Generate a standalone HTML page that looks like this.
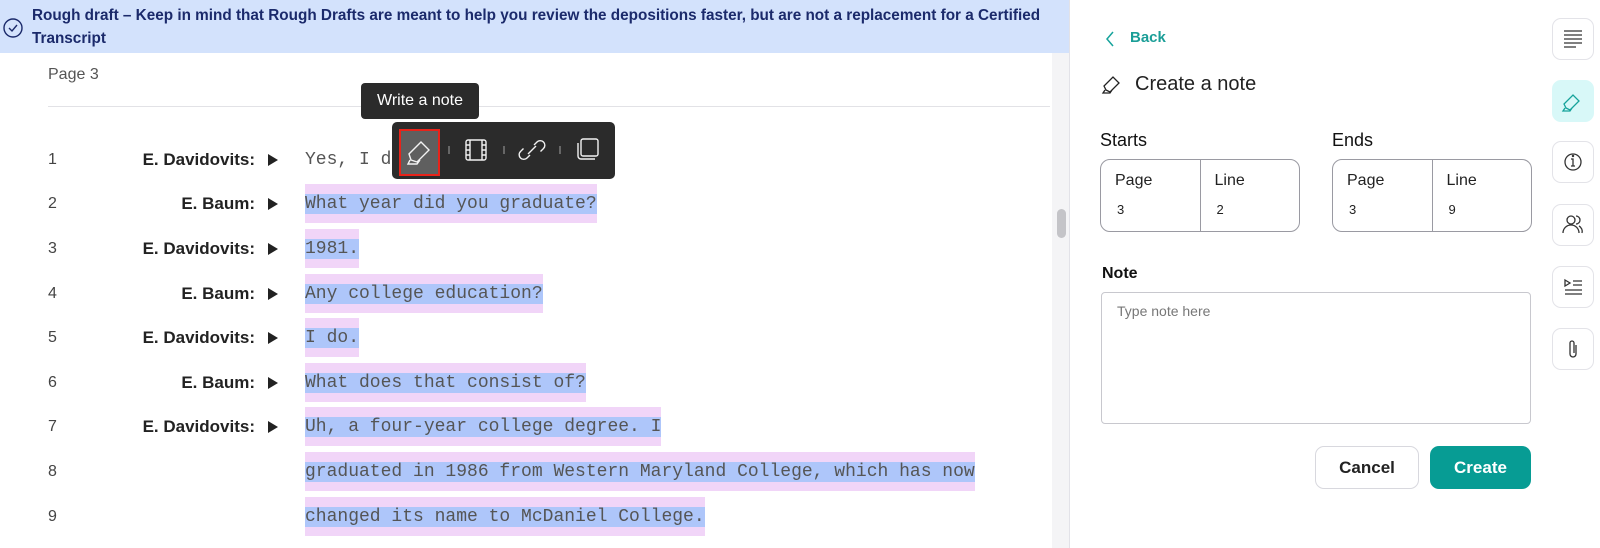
<!DOCTYPE html>
<html><head><meta charset="utf-8"><style>
*{box-sizing:border-box;margin:0;padding:0}
body{width:1600px;height:548px;background:#fff;position:relative;overflow:hidden;font-family:"Liberation Sans",sans-serif;color:#222}
.a{position:absolute}
.banner{left:0;top:0;width:1070px;height:53px;background:#d3e2fc;color:#1b2a6b;font-size:15.3px;font-weight:bold;line-height:23px;padding:4px 0 0 32px;white-space:nowrap}
.num{left:48px;font-size:16px;color:#444;width:20px}
.spk{width:255px;left:0;text-align:right;font-size:17px;font-weight:bold;color:#222}
.arr{left:268px;width:0;height:0;border-left:10px solid #222;border-top:6px solid transparent;border-bottom:6px solid transparent}
.txt{left:305px;height:39px;background:#f1d5f8;font-family:"Liberation Mono",monospace;font-size:18px;color:#555;padding-top:10px}
.txt span{background:#aec6fa;display:inline-block;height:20px;line-height:20px}
.ib{left:1552px;width:42px;height:42px;border:1px solid #e3e3e8;border-radius:9px;background:#fff}
.box{height:73px;border:1px solid #9a9aa2;border-radius:10px;display:flex}
.box div{flex:1;padding:12px 0 0 14px;font-size:16px;color:#222}
.box div+div{border-left:1px solid #9a9aa2}
.box b{display:block;font-weight:normal;font-size:13px;margin-top:12px;padding-left:2px}
</style></head><body>
<div class="a banner">Rough draft – Keep in mind that Rough Drafts are meant to help you review the depositions faster, but are not a replacement for a Certified<br>Transcript</div>
<svg class="a" style="left:2px;top:17px" width="22" height="22" viewBox="0 0 22 22"><circle cx="11" cy="11" r="9" fill="none" stroke="#1b2a6b" stroke-width="1.4"/><path d="M7 11l3 3 5-6" fill="none" stroke="#1b2a6b" stroke-width="1.4"/></svg>
<div class="a" style="left:48px;top:66px;font-size:16px;color:#555">Page 3</div>
<div class="a" style="left:48px;top:106px;width:1002px;height:1px;background:#e2e2e6"></div>
<div class="a" style="left:1052px;top:53px;width:18px;height:495px;background:#f4f4f6"></div>
<div class="a" style="left:1069px;top:0;width:1px;height:548px;background:#e2e2e8"></div>
<div class="a" style="left:1057px;top:209px;width:9px;height:29px;border-radius:5px;background:#c4c4c8"></div>

<div class="a num" style="top:151px">1</div><div class="a spk" style="top:150px">E. Davidovits:</div><div class="a arr" style="top:154px"></div><div class="a" style="left:305px;top:150px;font-family:'Liberation Mono',monospace;font-size:18px;color:#555">Yes, I do</div>
<div class="a num" style="top:195px">2</div><div class="a spk" style="top:194px">E. Baum:</div><div class="a arr" style="top:198px"></div><div class="a txt" style="top:184px"><span>What year did you graduate?</span></div>
<div class="a num" style="top:240px">3</div><div class="a spk" style="top:239px">E. Davidovits:</div><div class="a arr" style="top:243px"></div><div class="a txt" style="top:229px"><span>1981.</span></div>
<div class="a num" style="top:285px">4</div><div class="a spk" style="top:284px">E. Baum:</div><div class="a arr" style="top:288px"></div><div class="a txt" style="top:274px"><span>Any college education?</span></div>
<div class="a num" style="top:329px">5</div><div class="a spk" style="top:328px">E. Davidovits:</div><div class="a arr" style="top:332px"></div><div class="a txt" style="top:318px"><span>I do.</span></div>
<div class="a num" style="top:374px">6</div><div class="a spk" style="top:373px">E. Baum:</div><div class="a arr" style="top:377px"></div><div class="a txt" style="top:363px"><span>What does that consist of?</span></div>
<div class="a num" style="top:418px">7</div><div class="a spk" style="top:417px">E. Davidovits:</div><div class="a arr" style="top:421px"></div><div class="a txt" style="top:407px"><span>Uh, a four-year college degree. I</span></div>
<div class="a num" style="top:463px">8</div><div class="a txt" style="top:452px"><span>graduated in 1986 from Western Maryland College, which has now</span></div>
<div class="a num" style="top:508px">9</div><div class="a txt" style="top:497px"><span>changed its name to McDaniel College.</span></div>

<div class="a" style="left:361px;top:83px;width:118px;height:36px;background:#2b2b2b;border-radius:4px;color:#fff;font-size:16px;text-align:center;line-height:36px">Write a note</div>
<div class="a" style="left:392px;top:122px;width:223px;height:57px;background:#2b2b2b;border-radius:5px"></div>
<div class="a" style="left:399px;top:129px;width:41px;height:47px;border:2px solid #e8231a;background:#5f5f5f"></div>
<svg class="a" style="left:392px;top:122px" width="223" height="57" viewBox="0 0 223 57" fill="none" stroke="#f2f2f2" stroke-width="1.4">
<path d="M18 38l-2 4h9l3-4M19 38l-2-6 12-12 8 8-12 12z"/>
<line x1="57" y1="24" x2="57" y2="32" stroke="#666" stroke-width="2"/>
<rect x="74" y="18" width="20" height="20" rx="2"/><path d="M78 18v20M90 18v20M74 23h4M74 28h4M74 33h4M90 23h4M90 28h4M90 33h4"/>
<line x1="112" y1="24" x2="112" y2="32" stroke="#666" stroke-width="2"/>
<path d="M142 23l3-3a4.5 4.5 0 016.5 6.5l-3 3M138 33l-3 3a4.5 4.5 0 01-6.5-6.5l3-3M136 32l8-8"/>
<line x1="168" y1="24" x2="168" y2="32" stroke="#666" stroke-width="2"/>
<rect x="189" y="17" width="17" height="17" rx="2"/><path d="M186 21v13a3 3 0 003 3h14"/>
</svg>

<svg class="a" style="left:1104px;top:30px" width="12" height="18" viewBox="0 0 12 18"><path d="M9 2L3 9l6 7" fill="none" stroke="#16a39b" stroke-width="1.5"/></svg>
<div class="a" style="left:1130px;top:29px;font-size:15px;font-weight:bold;color:#1a9e97">Back</div>
<svg class="a" style="left:1101px;top:74px" width="22" height="22" viewBox="0 0 22 22" fill="none" stroke="#222" stroke-width="1.3"><path d="M4 16l-2 3h7l2-3M5 16l-2-4 9-9 6 6-9 9z"/></svg>
<div class="a" style="left:1135px;top:73px;font-size:20px;color:#222">Create a note</div>
<div class="a" style="left:1100px;top:130px;font-size:18px;color:#111">Starts</div>
<div class="a" style="left:1332px;top:130px;font-size:18px;color:#111">Ends</div>
<div class="a box" style="left:1100px;top:159px;width:200px"><div>Page<b>3</b></div><div>Line<b>2</b></div></div>
<div class="a box" style="left:1332px;top:159px;width:200px"><div>Page<b>3</b></div><div>Line<b>9</b></div></div>
<div class="a" style="left:1102px;top:265px;font-size:16px;font-weight:bold;color:#111">Note</div>
<div class="a" style="left:1101px;top:292px;width:430px;height:132px;border:1px solid #c8c8ce;border-radius:4px;padding:10px 15px;font-size:14px;color:#777">Type note here</div>
<div class="a" style="left:1315px;top:446px;width:104px;height:43px;border:1px solid #d8d8de;border-radius:9px;text-align:center;line-height:41px;font-size:17px;font-weight:bold;color:#222">Cancel</div>
<div class="a" style="left:1430px;top:446px;width:101px;height:43px;background:#079c94;border-radius:9px;text-align:center;line-height:43px;font-size:17px;font-weight:bold;color:#fff">Create</div>

<div class="a ib" style="top:18px"></div>
<div class="a ib" style="top:80px;background:#d8f8f8;border-color:#d8f8f8"></div>
<div class="a ib" style="top:141px"></div>
<div class="a ib" style="top:204px"></div>
<div class="a ib" style="top:266px"></div>
<div class="a ib" style="top:328px"></div>
<svg class="a" style="left:1552px;top:0" width="42" height="370" viewBox="0 0 42 370" fill="none" stroke="#333" stroke-width="1.3">
<path d="M12 31h18M12 35h18M12 39h18M12 43h18M12 47h12"/>
<path d="M13 108l-2 3h7l2-3M14 108l-2-4 9-9 6 6-9 9z" stroke="#16a39b"/>
<circle cx="21" cy="162" r="8"/><path d="M19 159h2v7M19 166h4"/><circle cx="21" cy="156" r=".6"/>
<circle cx="19" cy="220" r="4"/><path d="M11 233a8 8 0 0116 0M24 216a4 4 0 010 8M27 226a6 6 0 013 7"/>
<path d="M13 280l5 3-5 3zM21 281h9M21 285h9M13 290h17M13 294h17"/>
<path d="M24 345v9a3 3 0 01-6 0v-11a2 2 0 014 0v10"/>
</svg>
</body></html>
